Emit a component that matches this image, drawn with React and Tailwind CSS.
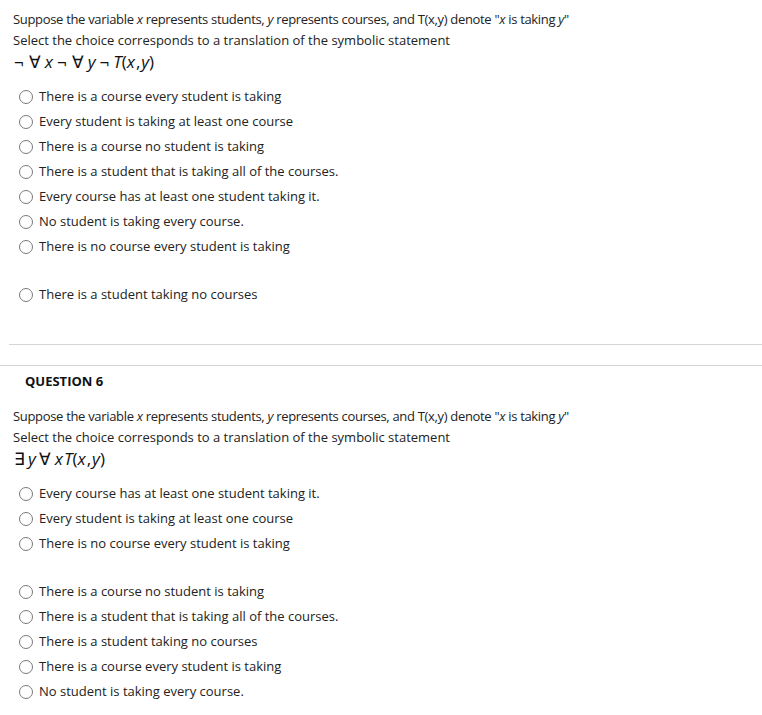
import React from "react";

function Radio({ label }) {
  return (
    <div className="flex items-center h-[25px]">
      <span className="ml-[19px] w-[14px] h-[14px] rounded-full border border-[#7a7a7a] bg-white shrink-0" />
      <span className="ml-[6px] text-[13px] text-[#222]">{label}</span>
    </div>
  );
}

function Stem({ math }) {
  return (
    <div className="pl-[13px] text-[13px] text-[#222] leading-[21px]">
      <div className="tracking-[-0.32px]">
        Suppose the variable <i>x</i> represents students, <i>y</i> represents courses, and T(x,y) denote "<i>x</i> is taking <i>y</i>"
      </div>
      <div>Select the choice corresponds to a translation of the symbolic statement</div>
      <div className="text-[17px] leading-[21px] text-[#111] pl-[1px]">{math}</div>
    </div>
  );
}

export default function App() {
  return (
    <div className="w-[762px] h-[715px] bg-white overflow-hidden" style={{ fontFamily: '"Open Sans", sans-serif' }}>
      <div className="pt-[9px]">
        <Stem
          math={
            <span>
              <span className="mr-[5px]">¬</span>
              <span className="mr-[4px]">∀</span>
              <i className="mr-[4px]">x</i>
              <span className="mr-[5px]">¬</span>
              <span className="mr-[4px]">∀</span>
              <i className="mr-[4px]">y</i>
              <span className="mr-[4px]">¬</span>
              <i>T</i>(<i className="mr-[1px]">x</i>,<i className="ml-[1px]">y</i>)
            </span>
          }
        />
        <div className="mt-[12px] flex flex-col">
          <Radio label="There is a course every student is taking" />
          <Radio label="Every student is taking at least one course" />
          <Radio label="There is a course no student is taking" />
          <Radio label="There is a student that is taking all of the courses." />
          <Radio label="Every course has at least one student taking it." />
          <Radio label="No student is taking every course." />
          <Radio label="There is no course every student is taking" />
          <div className="h-[23px]" />
          <Radio label="There is a student taking no courses" />
        </div>
      </div>
      <div className="mt-[37px] ml-[9px] border-t border-[#d4d4d4]" />
      <div className="mt-[20px] border-t border-[#d4d4d4]" />
      <div className="pl-[25px] pt-[6px] text-[13px] font-bold text-[#111] leading-[18px]">QUESTION 6</div>
      <div className="mt-[16px]">
        <Stem
          math={
            <span>
              <span className="mr-[3px]">∃</span>
              <i className="mr-[3px]">y</i>
              <span className="mr-[4px]">∀</span>
              <i className="mr-[1px]">x</i>
              <i>T</i>(<i className="mr-[1px]">x</i>,<i className="ml-[1px]">y</i>)
            </span>
          }
        />
        <div className="mt-[12px] flex flex-col">
          <Radio label="Every course has at least one student taking it." />
          <Radio label="Every student is taking at least one course" />
          <Radio label="There is no course every student is taking" />
          <div className="h-[23px]" />
          <Radio label="There is a course no student is taking" />
          <Radio label="There is a student that is taking all of the courses." />
          <Radio label="There is a student taking no courses" />
          <Radio label="There is a course every student is taking" />
          <Radio label="No student is taking every course." />
        </div>
      </div>
    </div>
  );
}
